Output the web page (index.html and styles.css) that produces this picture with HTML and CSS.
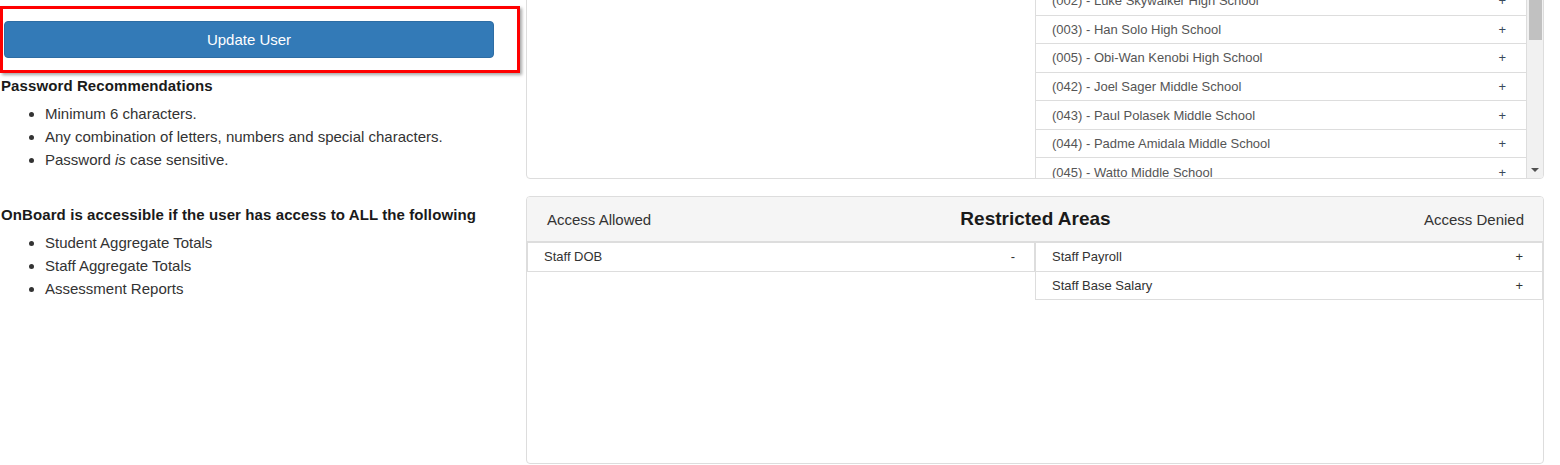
FILE: index.html
```html
<!DOCTYPE html>
<html lang="en">
<head>
<meta charset="utf-8">
<title>Update User</title>
<link rel="stylesheet" href="styles.css">
</head>
<body>
<div class="page">
  <div class="left-col">
    <div class="highlight">
      <button class="btn-primary" type="button">Update User</button>
    </div>
    <h4 class="note-title">Password Recommendations</h4>
    <ul class="note-list">
      <li>Minimum 6 characters.</li>
      <li>Any combination of letters, numbers and special characters.</li>
      <li>Password <em>is</em> case sensitive.</li>
    </ul>
    <h4 class="note-title onboard">OnBoard is accessible if the user has access to ALL the following</h4>
    <ul class="note-list">
      <li>Student Aggregate Totals</li>
      <li>Staff Aggregate Totals</li>
      <li>Assessment Reports</li>
    </ul>
  </div>
  <div class="right-col">
    <div class="panel schools">
      <div class="split">
        <div class="half"></div>
        <div class="half scroller">
          <div class="school-list">
            <div class="school-row"><span>(002) - Luke Skywalker High School</span><span class="sign">+</span></div>
            <div class="school-row"><span>(003) - Han Solo High School</span><span class="sign">+</span></div>
            <div class="school-row"><span>(005) - Obi-Wan Kenobi High School</span><span class="sign">+</span></div>
            <div class="school-row"><span>(042) - Joel Sager Middle School</span><span class="sign">+</span></div>
            <div class="school-row"><span>(043) - Paul Polasek Middle School</span><span class="sign">+</span></div>
            <div class="school-row"><span>(044) - Padme Amidala Middle School</span><span class="sign">+</span></div>
            <div class="school-row"><span>(045) - Watto Middle School</span><span class="sign">+</span></div>
          </div>
          <div class="scrollbar">
            <div class="thumb"></div>
            <div class="arrow-box"><div class="arrow-down"></div></div>
          </div>
        </div>
      </div>
    </div>
    <div class="panel areas">
      <div class="panel-heading">
        <span class="head-left">Access Allowed</span>
        <span class="head-title">Restricted Areas</span>
        <span class="head-right">Access Denied</span>
      </div>
      <div class="split">
        <div class="half">
          <div class="area-item"><span>Staff DOB</span><span class="sign">-</span></div>
        </div>
        <div class="half">
          <div class="area-item"><span>Staff Payroll</span><span class="sign">+</span></div>
          <div class="area-item"><span>Staff Base Salary</span><span class="sign">+</span></div>
        </div>
      </div>
    </div>
  </div>
</div>
</body>
</html>
```
FILE: styles.css
```css
html, body {
  margin: 0;
  padding: 0;
  background: #fff;
  overflow: hidden;
}
body {
  font-family: "Liberation Sans", Arial, sans-serif;
  font-size: 15px;
  color: #333;
}
.page {
  display: grid;
  grid-template-columns: 520px 1018px;
  column-gap: 6px;
  align-items: start;
}

/* left column */
.left-col {
  padding-top: 6px;
}
.highlight {
  border: 3px solid #f00;
  box-shadow: 2px 2px 3px rgba(0, 0, 0, 0.35);
  padding: 12px 23px 12px 1px;
  width: 490px;
}
.btn-primary {
  display: block;
  width: 100%;
  height: 37px;
  border: 1px solid #2e6da4;
  border-radius: 4px;
  background: #337ab7;
  color: #fff;
  font-family: "Liberation Sans", Arial, sans-serif;
  font-size: 15px;
  padding: 0;
  cursor: pointer;
}
.note-title {
  margin: 1px 0 0 1px;
  font-size: 15px;
  line-height: 23px;
  font-weight: bold;
  color: #1a1a1a;
  letter-spacing: 0.1px;
}
.note-title.onboard {
  margin-top: 32px;
}
.note-list {
  margin: 5px 0 0 0;
  padding-left: 45px;
  line-height: 23px;
}
.note-list em {
  font-style: italic;
}

/* right column */
.right-col {
  display: flex;
  flex-direction: column;
}
.panel {
  border: 1px solid #ddd;
  border-radius: 4px;
  background: #fff;
  overflow: hidden;
}
.panel.schools {
  margin-top: -14px;
  height: 191px;
  border-top-left-radius: 0;
  border-top-right-radius: 0;
}
.panel.areas {
  margin-top: 17px;
  height: 266px;
}
.split {
  display: grid;
  grid-template-columns: 508px 508px;
  align-items: start;
}
.scroller {
  display: flex;
  height: 191px;
}
.school-list {
  flex: 1;
  border-left: 1px solid #ddd;
  border-right: 1px solid #ddd;
  overflow: hidden;
}
.school-row {
  display: flex;
  justify-content: space-between;
  align-items: center;
  height: 27.57px;
  border-bottom: 1px solid #ddd;
  padding: 0 20px 0 16px;
  font-size: 13px;
  color: #555;
}
.school-row .sign {
  color: #3a4a5c;
}
.scrollbar {
  width: 16px;
  background: #f1f1f1;
  display: flex;
  flex-direction: column;
  justify-content: space-between;
}
.thumb {
  height: 53px;
  margin: 0 1px 0 2px;
  background: #c1c1c1;
}
.arrow-box {
  height: 16px;
  display: flex;
  justify-content: center;
  align-items: center;
}
.arrow-down {
  width: 0;
  height: 0;
  border-left: 4px solid transparent;
  border-right: 4px solid transparent;
  border-top: 4px solid #505050;
}

.panel-heading {
  display: grid;
  grid-template-columns: 1fr auto 1fr;
  align-items: center;
  height: 44px;
  padding: 0 19px 0 20px;
  background: #f5f5f5;
  border-bottom: 1px solid #ddd;
}
.head-left {
  justify-self: start;
  font-size: 15px;
}
.head-title {
  justify-self: center;
  font-size: 19px;
  font-weight: bold;
  color: #1a1a1a;
}
.head-right {
  justify-self: end;
  font-size: 15px;
}
.area-item {
  display: flex;
  justify-content: space-between;
  align-items: center;
  height: 27.5px;
  border: 1px solid #ddd;
  margin-bottom: -1px;
  padding: 0 19px 0 16px;
  font-size: 13px;
  color: #333;
}
```
